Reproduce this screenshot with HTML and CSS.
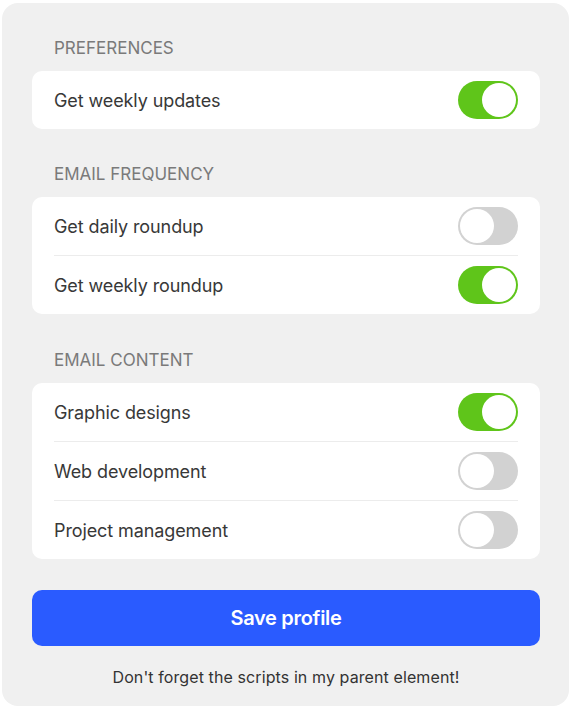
FILE: index.html
```html
<!DOCTYPE html>
<html lang="en">
<head>
<meta charset="utf-8">
<title>Email preferences</title>
<link rel="stylesheet" href="styles.css">
</head>
<body>
<div class="card">
  <section class="section">
    <h2 class="section-title">Preferences</h2>
    <div class="group">
      <div class="row"><span class="label">Get weekly updates</span><span class="toggle on"><span class="knob"></span></span></div>
    </div>
  </section>
  <section class="section">
    <h2 class="section-title">Email frequency</h2>
    <div class="group">
      <div class="row"><span class="label">Get daily roundup</span><span class="toggle"><span class="knob"></span></span></div>
      <div class="row"><span class="label">Get weekly roundup</span><span class="toggle on"><span class="knob"></span></span></div>
    </div>
  </section>
  <section class="section">
    <h2 class="section-title">Email content</h2>
    <div class="group">
      <div class="row"><span class="label">Graphic designs</span><span class="toggle on"><span class="knob"></span></span></div>
      <div class="row"><span class="label">Web development</span><span class="toggle"><span class="knob"></span></span></div>
      <div class="row"><span class="label">Project management</span><span class="toggle"><span class="knob"></span></span></div>
    </div>
  </section>
  <button class="save" type="button">Save profile</button>
  <p class="note">Don't forget the scripts in my parent element!</p>
</div>
</body>
</html>
```
FILE: styles.css
```css
* { box-sizing: border-box; }
html, body { margin: 0; padding: 0; background: #ffffff; }
body {
  font-family: Inter, "Noto Sans", sans-serif;
  padding: 3px 2px;
  height: 709px;
}
.card {
  background: #f0f0f0;
  border-radius: 16px;
  height: 703px;
  width: 567px;
  padding: 34px 29px 18px 30px;
  display: flex;
  flex-direction: column;
}
.section { margin-bottom: 34px; }
.section:nth-of-type(2) { margin-bottom: 35px; }
.section:nth-of-type(3) { margin-bottom: 31px; }
.section-title {
  margin: 0 0 12px;
  padding-left: 22px;
  font-size: 17px;
  line-height: 22px;
  font-weight: 400;
  color: #7a7a7a;
  text-transform: uppercase;
}
.group {
  background: #ffffff;
  border-radius: 10px;
  padding: 0 22px;
}
.row {
  height: 58px;
  display: flex;
  align-items: center;
  justify-content: space-between;
}
.row + .row { border-top: 1px solid #ececec; height: 59px; }
.label {
  font-size: 18px;
  color: #383838;
  letter-spacing: -0.1px;
}
.toggle {
  width: 60px;
  height: 38px;
  border-radius: 19px;
  background: #d2d2d2;
  padding: 2px;
  display: flex;
  justify-content: flex-start;
}
.toggle.on {
  background: #5fc51a;
  justify-content: flex-end;
}
.knob {
  width: 34px;
  height: 34px;
  border-radius: 50%;
  background: #ffffff;
}
.save {
  height: 56px;
  border: none;
  border-radius: 10px;
  background: #2a5bff;
  color: #ffffff;
  font-family: Inter, "Noto Sans", sans-serif;
  font-size: 20px;
  font-weight: 600;
  letter-spacing: -0.3px;
  cursor: pointer;
}
.note {
  margin: 20px 0 0;
  text-align: center;
  font-size: 16px;
  line-height: 22px;
  letter-spacing: 0.1px;
  color: #333333;
}
```
